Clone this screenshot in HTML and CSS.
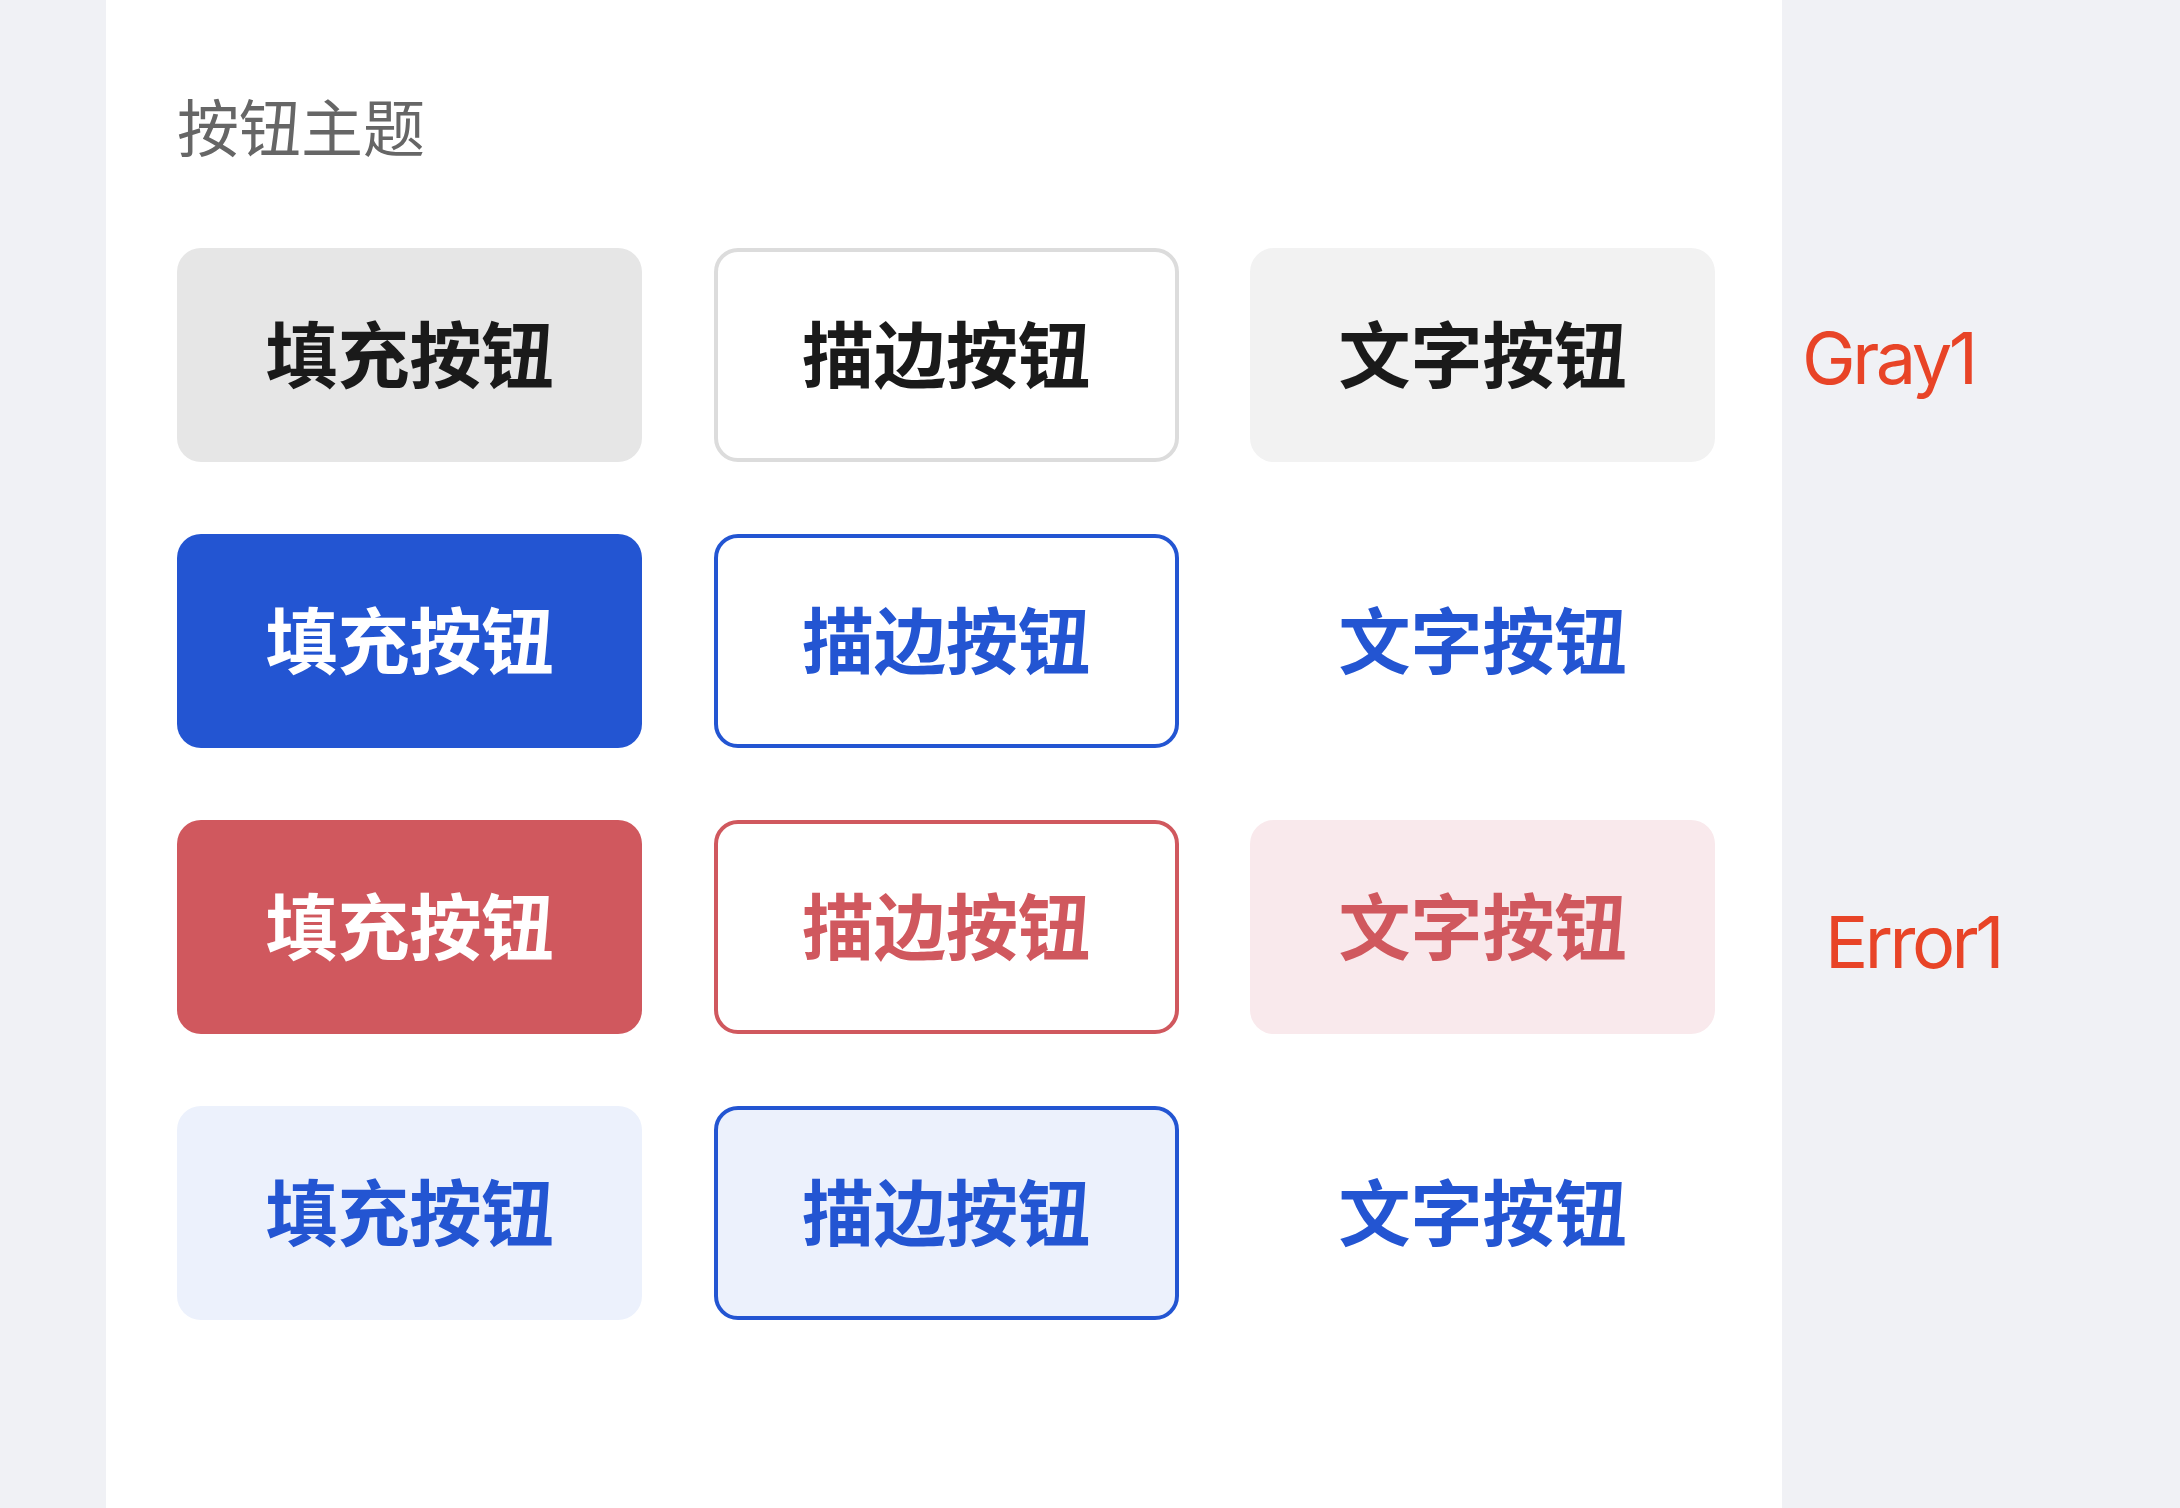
FILE: index.html
```html
<!DOCTYPE html>
<html lang="zh-CN">

<head>
    <meta charset="UTF-8">
    <meta name="viewport" content="width=device-width, initial-scale=1.0">
    <title>按钮主题</title>
    <link rel="stylesheet" href="styles.css">
</head>

<body>
    <div class="page">
        <div class="panel">
            <h2 class="title">按钮主题</h2>
            <div class="btn-grid">
                <!-- Gray1 -->
                <button class="btn gray-fill">填充按钮</button>
                <button class="btn gray-outline">描边按钮</button>
                <button class="btn gray-text">文字按钮</button>
                <!-- 主色 -->
                <button class="btn blue-fill">填充按钮</button>
                <button class="btn blue-outline">描边按钮</button>
                <button class="btn blue-text">文字按钮</button>
                <!-- Error1 -->
                <button class="btn red-fill">填充按钮</button>
                <button class="btn red-outline">描边按钮</button>
                <button class="btn red-text">文字按钮</button>
                <!-- 浅色 -->
                <button class="btn light-fill">填充按钮</button>
                <button class="btn light-outline">描边按钮</button>
                <button class="btn blue-text">文字按钮</button>
            </div>
        </div>
        <div class="notes">
            <div class="note note-gray">Gray1</div>
            <div class="note note-error">Error1</div>
        </div>
    </div>
</body>
</html>
```

FILE: styles.css
```css
/* 通用样式 */
body {
    margin: 0;
    background-color: #f0f1f5;
    font-family: "Noto Sans CJK SC", "Noto Sans", sans-serif;
}

.page {
    display: flex;
    min-height: 100vh;
}

.panel {
    width: 1676px;
    margin-left: 106px;
    padding: 94px 0 0 71px;
    box-sizing: border-box;
    background-color: #fff;
}

.title {
    margin: 0;
    font-size: 62px;
    line-height: 1;
    font-weight: 400;
    color: #666;
}

/* 按钮网格 */
.btn-grid {
    display: grid;
    grid-template-columns: repeat(3, 465px);
    grid-auto-rows: 214px;
    column-gap: 71.5px;
    row-gap: 72px;
    margin-top: 92px;
}

.btn {
    display: flex;
    align-items: center;
    justify-content: center;
    padding: 0 0 8px;
    border: 4px solid transparent;
    border-radius: 24px;
    background: transparent;
    font-family: "Noto Sans CJK SC", sans-serif;
    font-size: 72px;
    font-weight: 700;
    line-height: 1;
    cursor: pointer;
}

.gray-fill {
    background-color: #e6e6e6;
    color: #1a1a1a;
}

.gray-outline {
    background-color: #fff;
    border-color: #dcdcdc;
    color: #1a1a1a;
}

.gray-text {
    background-color: #f2f2f2;
    color: #1a1a1a;
}

.blue-fill {
    background-color: #2355d2;
    color: #fff;
}

.blue-outline {
    background-color: #fff;
    border-color: #2355d2;
    color: #2355d2;
}

.blue-text {
    color: #2355d2;
}

.red-fill {
    background-color: #d0585e;
    color: #fff;
}

.red-outline {
    background-color: #fff;
    border-color: #d0585e;
    color: #d0585e;
}

.red-text {
    background-color: #f9e9ec;
    color: #d0585e;
}

.light-fill {
    background-color: #ecf1fc;
    color: #2355d2;
}

.light-outline {
    background-color: #ecf1fc;
    border-color: #2355d2;
    color: #2355d2;
}

/* 右侧标注 */
.notes {
    display: grid;
    grid-auto-rows: 214px;
    row-gap: 72px;
    align-content: start;
    padding-top: 248px;
}

.note {
    font-family: Inter, "Liberation Sans", sans-serif;
    font-size: 72px;
    line-height: 1;
    letter-spacing: -3.5px;
    color: #e84427;
    align-self: center;
}

.note-gray {
    margin: 6px 0 0 20px;
}

.note-error {
    grid-row: 3;
    margin: 30px 0 0 43px;
}
```
